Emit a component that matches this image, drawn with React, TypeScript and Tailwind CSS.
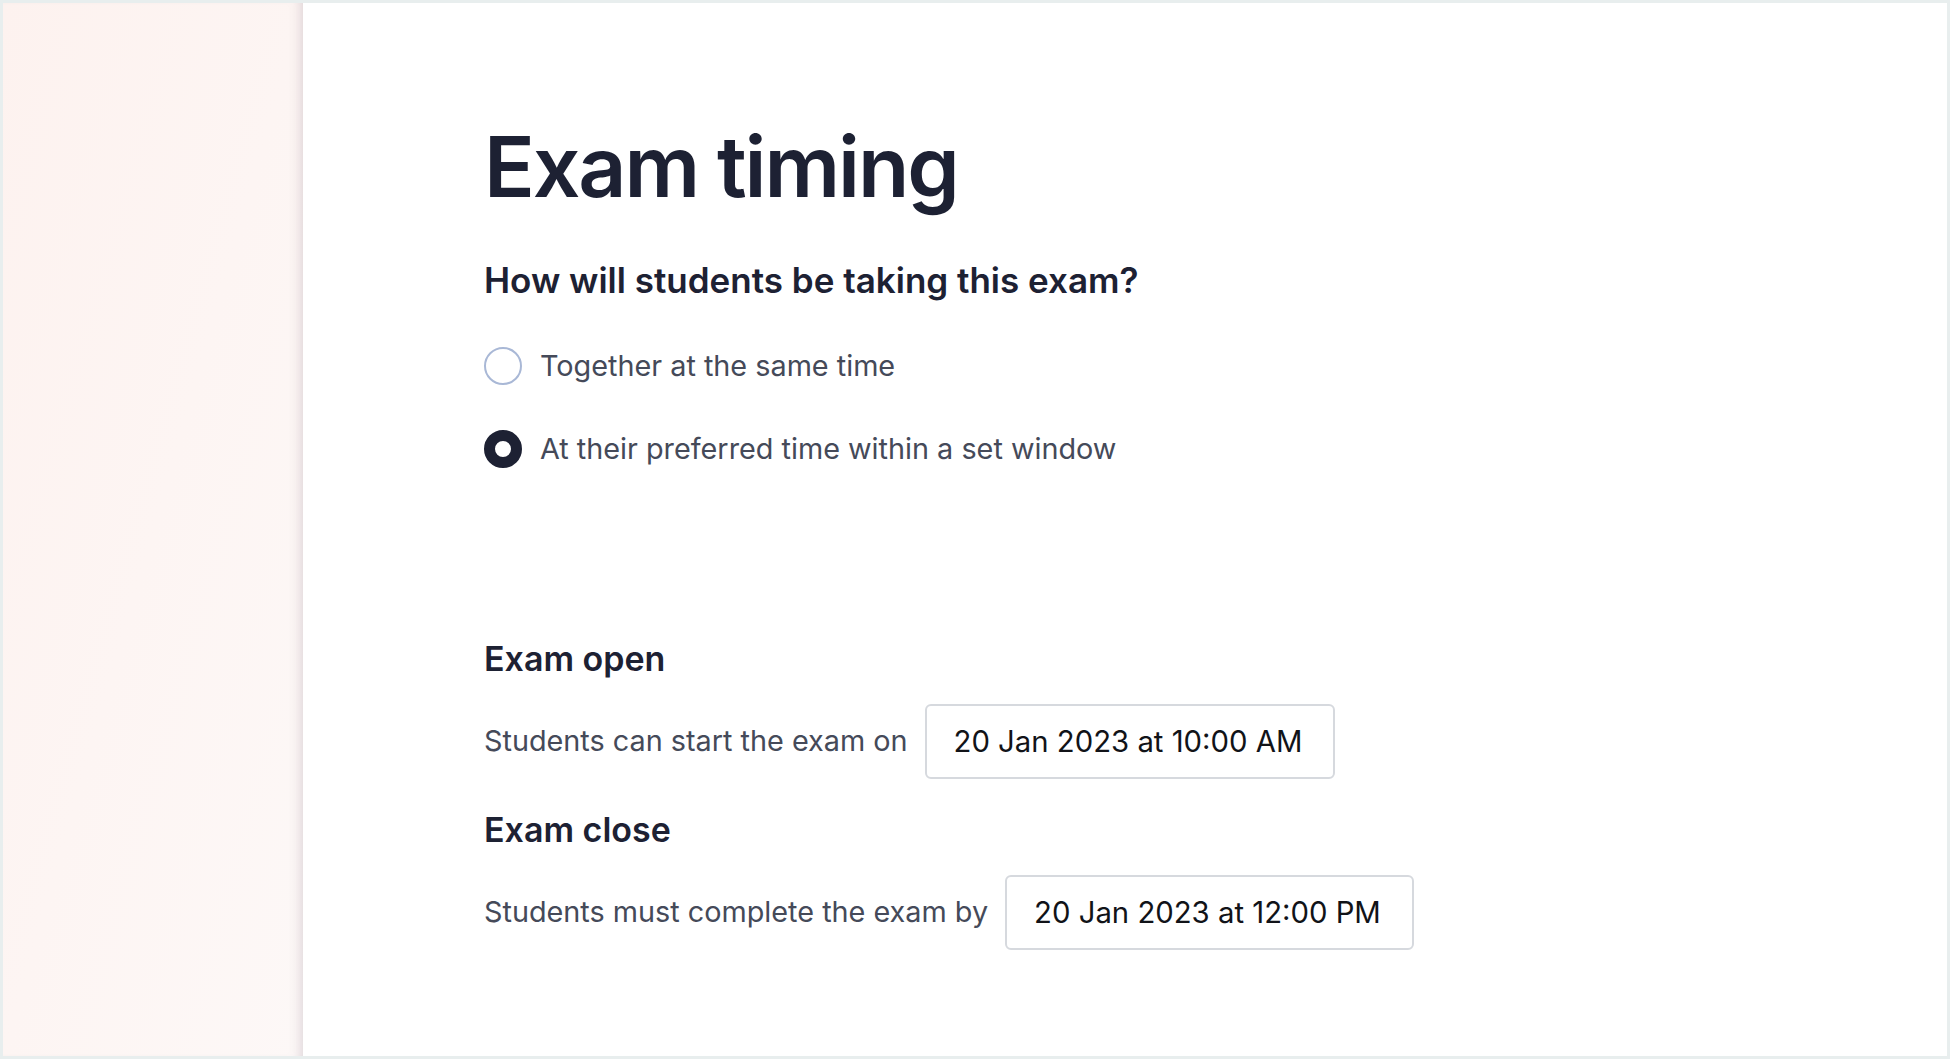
import { useState } from 'react';

const font = { fontFamily: 'Inter, "Noto Sans", sans-serif' };

export default function App() {
  const [mode, setMode] = useState<'together' | 'window'>('window');

  const options = [
    { id: 'together' as const, label: 'Together at the same time' },
    { id: 'window' as const, label: 'At their preferred time within a set window' },
  ];

  return (
    <div className="h-[1059px] w-[1950px] bg-[#e8eeee] p-[3px]" style={font}>
      <div className="flex h-full w-full">
        {/* Side panel */}
        <div className="w-[300px] shrink-0 bg-gradient-to-br from-[#fdf2ef] to-[#fdf8f7] shadow-[inset_-12px_0_12px_-10px_rgba(120,100,120,0.25)]" />

        {/* Main content */}
        <div className="flex-1 bg-white pl-[181px] pt-[122px]">
          <h1 className="text-[84px] font-semibold leading-none tracking-[-0.025em] text-[#1d2133]">Exam timing</h1>

          <h2 className="mt-[54px] text-[35px] font-semibold leading-none text-[#1d2133]">
            How will students be taking this exam?
          </h2>

          <div className="mt-[48px] flex flex-col gap-[43px]">
            {options.map((opt) => (
              <label key={opt.id} className="flex h-10 cursor-pointer items-center gap-[18px]" onClick={() => setMode(opt.id)}>
                {mode === opt.id ? (
                  <span className="h-[38px] w-[38px] rounded-full border-[11px] border-[#1d2133] bg-white" />
                ) : (
                  <span className="h-[38px] w-[38px] rounded-full border-2 border-[#a9b8d6] bg-white" />
                )}
                <span className="text-[28.8px] leading-none text-[#454a59]">{opt.label}</span>
              </label>
            ))}
          </div>

          {/* Exam open */}
          <h3 className="mt-[173px] text-[34px] font-semibold leading-none text-[#1d2133]">Exam open</h3>
          <div className="mt-[28px] flex items-center gap-[17px]">
            <span className="text-[28.8px] leading-none text-[#454a59]">Students can start the exam on</span>
            <div className="flex h-[75px] items-center rounded-md border-2 border-[#d6d9de] pl-[27px] pr-[31px] text-[29.3px] text-[#111318]">
              20 Jan 2023 at 10:00 AM
            </div>
          </div>

          {/* Exam close */}
          <h3 className="mt-[34px] text-[34px] font-semibold leading-none text-[#1d2133]">Exam close</h3>
          <div className="mt-[28px] flex items-center gap-[17px]">
            <span className="text-[28.8px] leading-none text-[#454a59]">Students must complete the exam by</span>
            <div className="flex h-[75px] items-center rounded-md border-2 border-[#d6d9de] pl-[27px] pr-[31px] text-[29.3px] text-[#111318]">
              20 Jan 2023 at 12:00 PM
            </div>
          </div>
        </div>
      </div>
    </div>
  );
}
